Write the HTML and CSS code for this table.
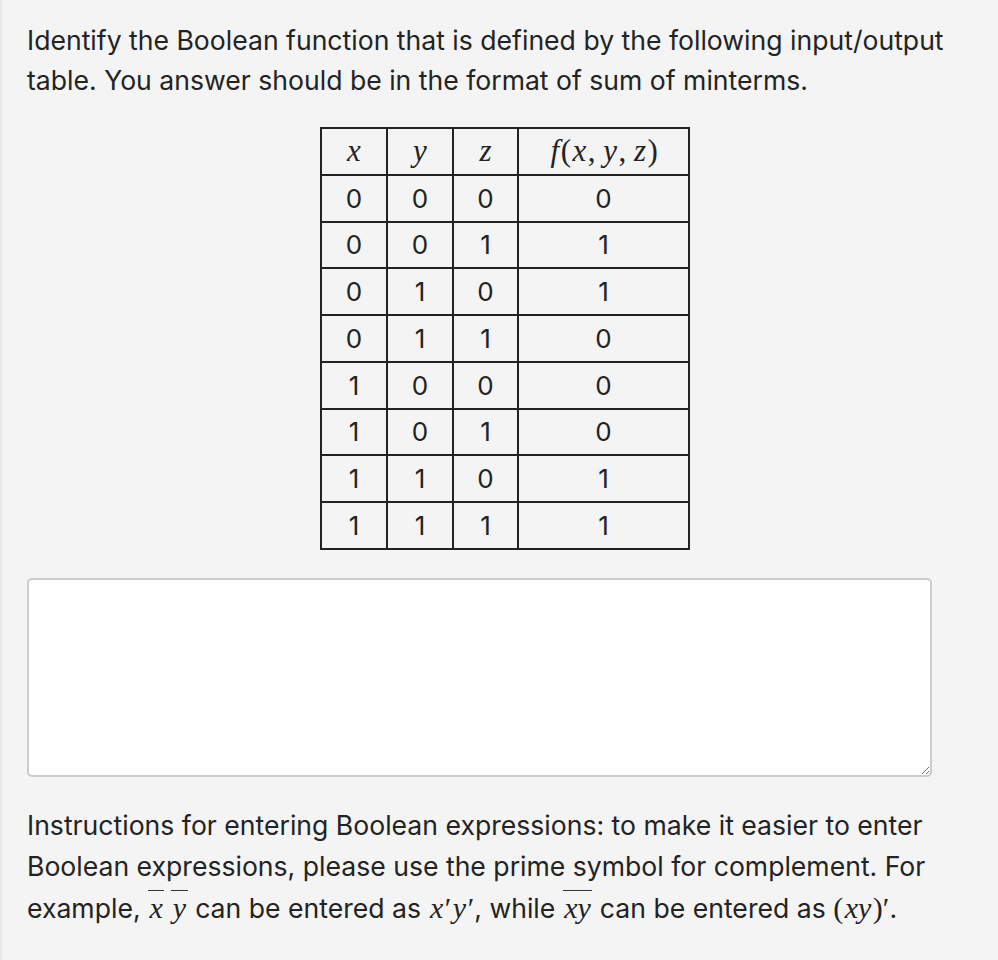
FILE: index.html
```html
<!DOCTYPE html>
<html>
<head>
<meta charset="utf-8">
<link rel="stylesheet" href="styles.css">
</head>
<body>
<div class="page">
  <p class="question">Identify the Boolean function that is defined by the following input/output table. You answer should be in the format of sum of minterms.</p>
  <div class="table-wrap">
    <table class="truth">
      <colgroup><col class="c1"><col class="c2"><col class="c3"><col class="c4"></colgroup>
      <thead>
        <tr><th><span class="math"><i>x</i></span></th><th><span class="math"><i>y</i></span></th><th><span class="math"><i>z</i></span></th><th><span class="math"><i>f</i>(<i>x</i>,&#8201;<i>y</i>,&#8201;<i>z</i>)</span></th></tr>
      </thead>
      <tbody>
        <tr><td>0</td><td>0</td><td>0</td><td>0</td></tr>
        <tr><td>0</td><td>0</td><td>1</td><td>1</td></tr>
        <tr><td>0</td><td>1</td><td>0</td><td>1</td></tr>
        <tr><td>0</td><td>1</td><td>1</td><td>0</td></tr>
        <tr><td>1</td><td>0</td><td>0</td><td>0</td></tr>
        <tr><td>1</td><td>0</td><td>1</td><td>0</td></tr>
        <tr><td>1</td><td>1</td><td>0</td><td>1</td></tr>
        <tr><td>1</td><td>1</td><td>1</td><td>1</td></tr>
      </tbody>
    </table>
  </div>
  <textarea class="answer"></textarea>
  <p class="instructions">Instructions for entering Boolean expressions: to make it easier to enter Boolean expressions, please use the prime symbol for complement. For example, <span class="math"><span class="ov"><i>x</i></span><span class="ov gap"><i>y</i></span></span> can be entered as <span class="math"><i>x</i>′<i>y</i>′</span>, while <span class="math"><span class="ov"><i>xy</i></span></span> can be entered as <span class="math">(<i>xy</i>)′</span>.</p>
</div>
</body>
</html>
```

FILE: styles.css
```css
html, body {
  margin: 0;
  padding: 0;
}
body {
  background: #f4f4f4;
  font-family: Inter, "Noto Sans", sans-serif;
  color: #232323;
  min-height: 960px;
}
.page {
  border-left: 2px solid #e8e8e8;
  padding: 20px 15px 20px 25px;
  min-height: 920px;
}
.question {
  margin: 0;
  font-size: 26.6px;
  line-height: 40px;
}
.table-wrap {
  display: flex;
  justify-content: center;
  margin-top: 27px;
}
.truth {
  border-collapse: collapse;
  table-layout: fixed;
  width: 368px;
  font-size: 26px;
}
.c1, .c2 { width: 66px; }
.c3 { width: 65px; }
.c4 { width: 171px; }
.truth th, .truth td {
  border: 2px solid #222;
  height: 44.75px;
  padding: 0;
  text-align: center;
  font-weight: normal;
}
.math {
  font-family: "Liberation Serif", "DejaVu Serif", serif;
  font-size: 30px;
  white-space: nowrap;
}
.math i {
  font-style: italic;
  padding: 0 1.5px;
}
.truth th .math {
  font-size: 31px;
}
.answer {
  display: block;
  box-sizing: border-box;
  width: 905px;
  height: 199px;
  margin-top: 28px;
  border: 2px solid #cccccc;
  border-radius: 5px;
  background: #fff;
}
.instructions {
  margin: 28px 0 0;
  font-size: 26.6px;
  line-height: 41px;
}
.ov {
  display: inline-block;
  border-top: 1.5px solid #333;
  line-height: 1;
  padding-top: 2px;
}
.ov.gap {
  margin-left: 7px;
}
```
